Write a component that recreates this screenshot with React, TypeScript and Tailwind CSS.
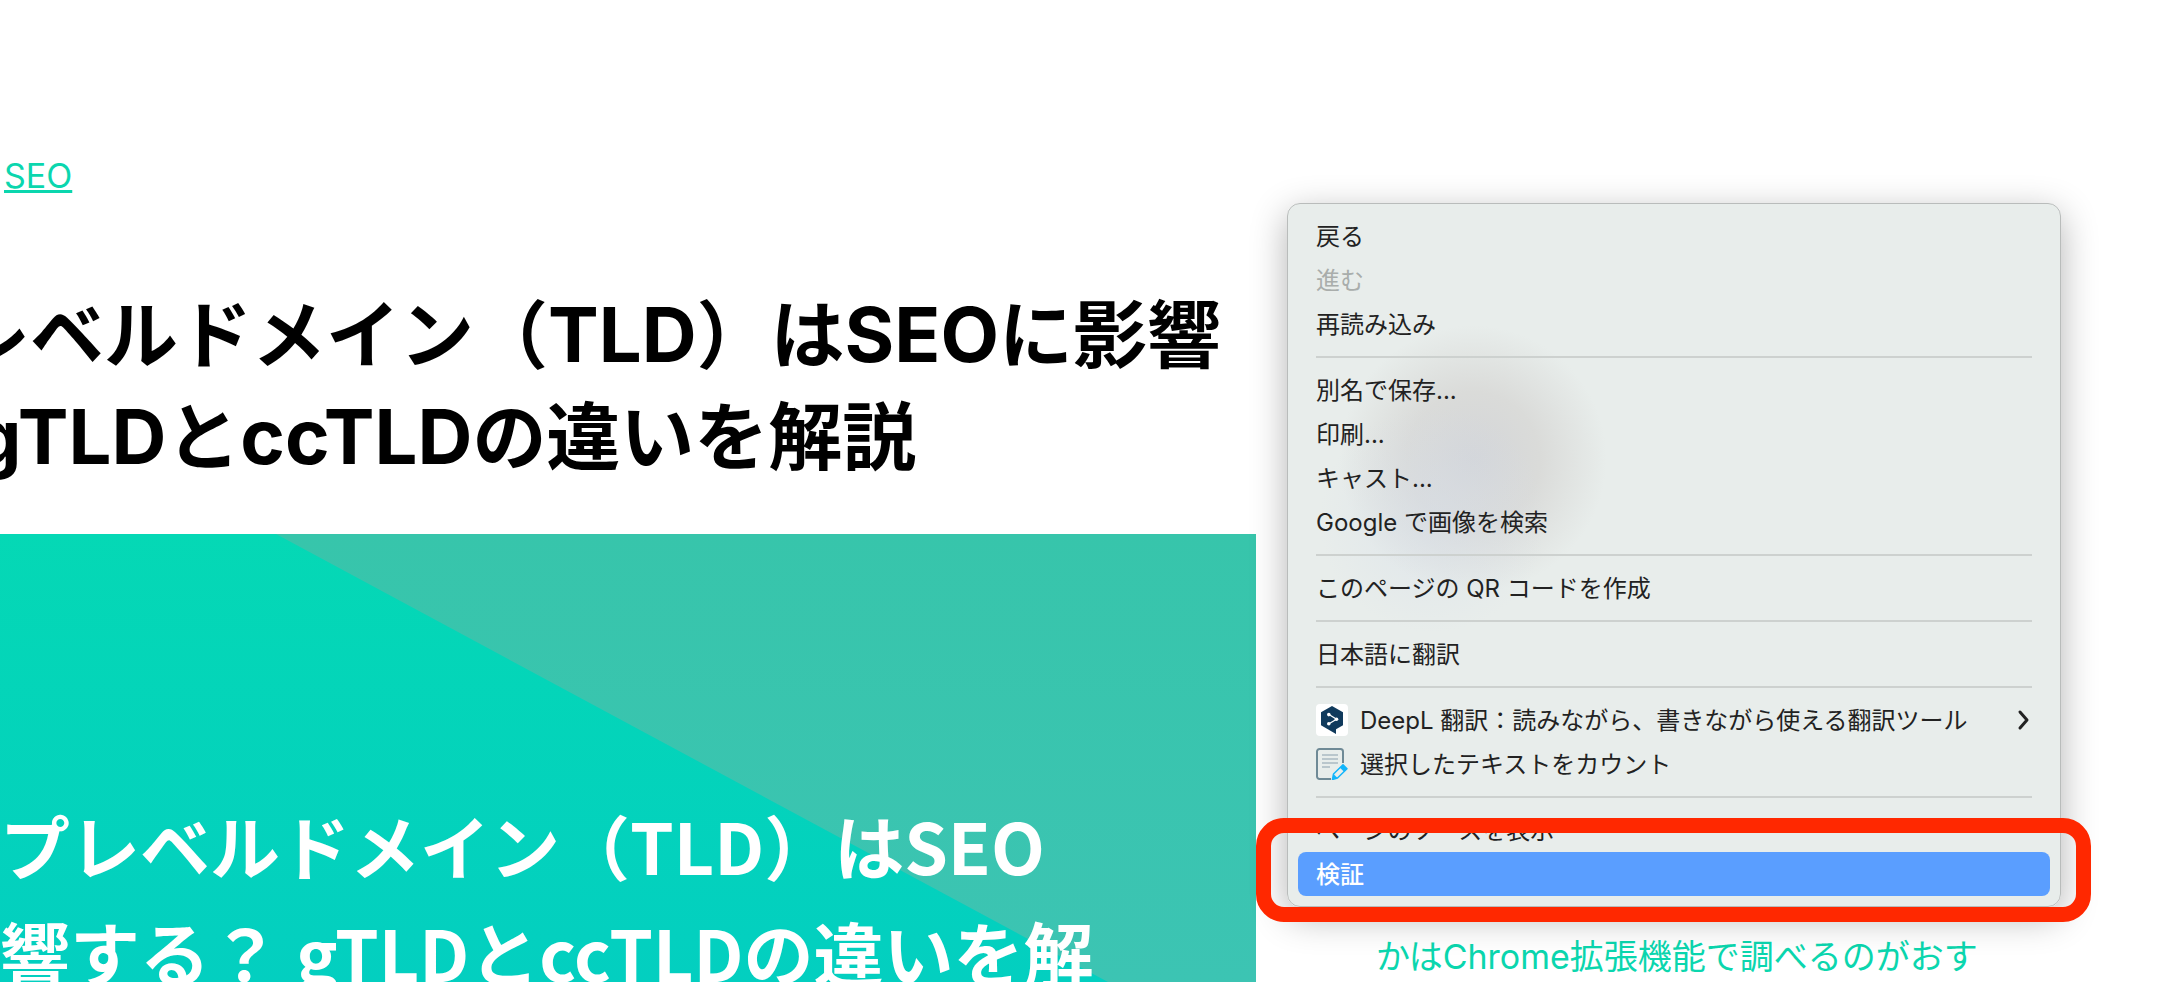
import clsx from "clsx"

type MenuItem = {
    label : string ;
    icon? : "deepl" | "note" ;
    disabled? : boolean ;
    active? : boolean ;
    submenu? : boolean ;
}

const menuGroups : MenuItem[][] = [
    [{label : "戻る"} , {label : "進む" , disabled : true} , {label : "再読み込み"}],
    [{label : "別名で保存..."} , {label : "印刷..."} , {label : "キャスト..."} , {label : "Google で画像を検索"}],
    [{label : "このページの QR コードを作成"}],
    [{label : "日本語に翻訳"}],
    [
        {label : "DeepL 翻訳：読みながら、書きながら使える翻訳ツール" , icon : "deepl" , submenu : true},
        {label : "選択したテキストをカウント" , icon : "note"},
    ],
    [{label : "ページのソースを表示"} , {label : "検証" , active : true}],
]

function DeepLIcon(){
    return(
        <svg viewBox="0 0 32 32" className="size-8 shrink-0" aria-hidden="true">
            <rect width="32" height="32" rx="4" fill="#fff" />
            <path d="M16 2 27 8.2v13L20 25.2V30l-6-3.4L5 21.2v-13z" fill="#103a5c" />
            <path d="M13 10.5 20.500 15.200 13 19.800" fill="none" stroke="#fff" strokeWidth="1.300" />
            <circle cx="12.800" cy="10.600" r="1.800" fill="#fff" />
            <circle cx="20.500" cy="15.200" r="1.800" fill="#fff" />
            <circle cx="12.800" cy="19.800" r="1.800" fill="#fff" />
        </svg>
    )
}

function NoteIcon(){
    return(
        <svg viewBox="0 0 32 32" className="size-8 shrink-0" aria-hidden="true">
            <path d="M27 15V3.500A2.500 2.500 0 0 0 24.500 1h-21A2.500 2.500 0 0 0 1 3.500v25A2.500 2.500 0 0 0 3.500 31H15" fill="none" stroke="#6f8a96" strokeWidth="2" />
            <path d="M6 7h16M6 11h16M6 15h16M6 19h8" stroke="#b9c6cc" strokeWidth="2" />
            <path d="M17.500 26 27 16.800l4 4L21.500 30l-5 1.500z" fill="#e9edeb" stroke="#12b5fb" strokeWidth="1.500" strokeLinejoin="round" />
            <path d="m27 16.800 4 4-3 3-4-4zM17.500 26l4 4-5 1.500z" fill="#12b5fb" />
        </svg>
    )
}

function ContextMenu(){
    return(
        <div
            role="menu"
            className="relative overflow-hidden rounded-[13px] border border-[#b9bcbb] bg-[#e8edeb] p-[10px] text-2xl text-[#222]"
        >
            {/* page colours showing through the menu */}
            <div className="absolute left-[50px] top-[120px] size-[270px] rounded-full bg-[radial-gradient(circle,#d3d5d8_0%,#dadbd9_35%,#e8edeb00_70%)]" />
            <div className="absolute left-[30px] top-[200px] size-[230px] rounded-full bg-[radial-gradient(circle,#d6deea80_0%,#e8edeb00_70%)]" />
            {menuGroups.map((group , index) => (
                <div key={index} className="relative">
                    {index > 0 && <hr className="mx-[18px] my-[10px] border-t-2 border-[#cdd1cf]" />}
                    {group.map((item) => (
                        <button
                            key={item.label}
                            type="button"
                            role="menuitem"
                            disabled={item.disabled}
                            className={clsx(
                                "flex h-11 w-full items-center gap-3 rounded-lg px-[18px] text-left whitespace-nowrap",
                                item.disabled && "text-[#a9adab]",
                                item.active && "bg-[#5a9eff] font-medium text-white",
                            )}
                        >
                            {item.icon === "deepl" && <DeepLIcon />}
                            {item.icon === "note" && <NoteIcon />}
                            <span className="flex-1 pt-[2px]">{item.label}</span>
                            {item.submenu && (
                                <svg viewBox="0 0 16 24" className="h-6 w-4" aria-hidden="true">
                                    <path d="m4 4 7 8-7 8" fill="none" stroke="#222" strokeWidth="3" strokeLinecap="round" strokeLinejoin="round" />
                                </svg>
                            )}
                        </button>
                    ))}
                </div>
            ))}
        </div>
    )
}

export default function App(){
    return(
        <main className="relative flex h-screen overflow-hidden bg-white font-['Inter','Noto_Sans_CJK_JP',sans-serif]">
            <article className="-ml-[266px] flex w-[1522px] shrink-0 flex-col">
                <nav className="pl-[270px] pt-[150px] text-[34px] leading-[51px]">
                    <a href="#seo" className="text-[#0bd6ae] underline decoration-[3px] underline-offset-2">SEO</a>
                </nav>
                <h1 className="mt-[83px] text-[74px] leading-[101px] font-bold whitespace-nowrap text-black">
                    トップレベルドメイン（<span className="text-[76px]">TLD</span>）は<span className="text-[76px]">SEO</span>に影響<br />
                    する？ <span className="text-[76px]">gTLD</span>と<span className="text-[76px]">ccTLD</span>の違いを解説
                </h1>
                <div className="relative mt-[46px] flex-1 overflow-hidden bg-linear-to-b from-[#05d8b5] to-[#03cfc0]">
                    <div className="absolute inset-0 bg-linear-to-b from-[#37c5ab] to-[#3cc4b3] [clip-path:polygon(542px_0,100%_0,100%_100%,1374px_448px)]" />
                    <p className="relative pl-[126px] pt-[257px] font-['Noto_Sans_CJK_JP',sans-serif] text-[70px] leading-[107px] font-bold whitespace-nowrap text-white">
                        トップレベルドメイン（TLD）はSEO<br />
                        に影響する？ gTLDとccTLDの違いを解
                    </p>
                </div>
            </article>
            <aside className="flex-1 pl-[120px] pt-[880px] text-[34px] leading-[51px] whitespace-nowrap">
                <a href="#related" className="block text-[#0bd6ae]">
                    【無料】検索順位の推移と評価をツール<br />
                    かはChrome拡張機能で調べるのがおす
                </a>
            </aside>
            <div className="absolute left-[1287px] top-[203px] w-[774px] rounded-[13px] shadow-[0_10px_36px_rgba(0,0,0,0.3)]">
                <ContextMenu />
            </div>
            <div className="absolute left-[1256px] top-[818px] h-[104px] w-[835px] rounded-[28px] border-[15px] border-[#ff2800]" />
        </main>
    )
}
